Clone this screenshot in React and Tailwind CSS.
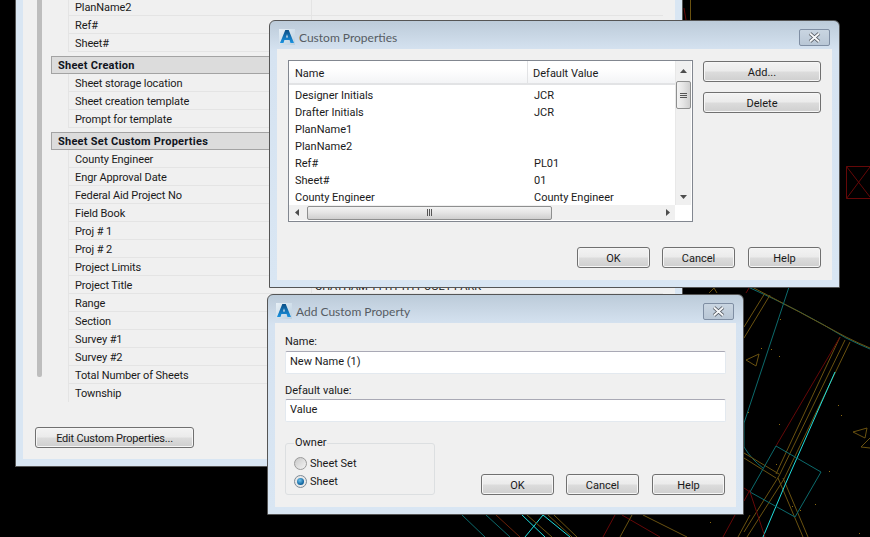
import React from "react";

// CAD drawing behind the dialogs
const BROWN = "#6a5210";
const TEAL = "#0c6a6c";
const RED = "#650808";
const CYAN = "#1fdcdc";

const cadLines = [
  // top
  [RED, "M684 8 Q685 14 686 20"],
  [BROWN, "M690.5 0 L690.5 20"],
  [RED, "M846.5 166.5 H870 M846.5 166.5 V198.5 H870 M846.5 166.5 L870 197 M846.5 198.5 L870 167"],
  // big arc
  [TEAL, "M748 287 Q800 310 846 338 Q858 344 870 349"],
  [BROWN, "M752 287 Q800 312 846 337 Q858 343 870 348"],
  // teal road edge
  [TEAL, "M789 287 L744 423 L744 447 Q752 460 763 468"],
  // brown doubles
  [BROWN, "M770 295 L744 338 M765 293 L744 327"],
  [BROWN, "M845 340 L779 476 L744 532 M850 342 L784 479 L747 537 M840 337 L776 474"],
  [BROWN, "M744 453 L779 474 M744 458 L776 478"],
  [BROWN, "M778 478 L803 537 M783 478 L808 537"],
  [RED, "M840 337 L776 446"],
  [CYAN, "M835 372 L785 485 L763 537"],
  [TEAL, "M776 446 L821 472 L795 517 L750 492 Z"],
  [RED, "M744 488 L750 492 L765 537 M750 490 L744 501"],
  [BROWN, "M746 360 L759 354 L756 366 Z"],
  [BROWN, "M853 432 L867 428 L865 438 Z"],
  [BROWN, "M870 438 L861 447 L870 448"],
  // bottom
  [BROWN, "M709 293 L714 288 L717 293"],
  [RED, "M746 293 L749 288"],
  [TEAL, "M462 515 L485 537 M486 515 L510 537"],
  ["#6b2208", "M496 515 L520 537"],
  [CYAN, "M522 515 L545 537 M543 515 L570 537 M543 515 L525 537"],
  [BROWN, "M527 515 L552 537 M548 515 L572 537 M554 515 L577 537"],
  [RED, "M622 515 L660 537 M615 515 L603 537 M735 515 L723 537"],
  [BROWN, "M632 515 L620 537 M643 515 L687 537 M750 515 L738 537"],
];

const cadDots = [
  [780, 319], [771, 349], [779, 356], [761, 348], [838, 405], [841, 415], [779, 424], [829, 471],
  [776, 464], [792, 506], [815, 504], [859, 533], [710, 522], [748, 412], [636, 348], [800, 510],
];

function CadDrawing() {
  return (
    <svg className="absolute inset-0" width="870" height="537" viewBox="0 0 870 537" fill="none">
      {cadLines.map(([color, d], i) => (
        <path key={i} d={d} stroke={color} strokeWidth="1" />
      ))}
      {cadDots.map(([x, y], i) => (
        <rect key={i} x={x} y={y} width="1" height="1" fill="#8a6a10" />
      ))}
    </svg>
  );
}

function AppIcon({ id }) {
  return (
    <svg width="16" height="16" viewBox="0 0 16 16" className="shrink-0">
      <defs>
        <linearGradient id={id + "bg"} x1="0" y1="0" x2="1" y2="1">
          <stop offset="0" stopColor="#e8f0f6" />
          <stop offset="1" stopColor="#bcd0e0" />
        </linearGradient>
        <linearGradient id={id + "leg"} x1="0" y1="0" x2="0" y2="1">
          <stop offset="0" stopColor="#0b4f86" />
          <stop offset="1" stopColor="#1a92e0" />
        </linearGradient>
      </defs>
      <rect width="16" height="16" fill={"url(#" + id + "bg)"} />
      <path d="M6.3 1 H9.7 L15 14 H11.5 L10.6 11 H5.4 L4.5 14 H1 Z M7 8.5 H9 L8 5.2 Z" fill={"url(#" + id + "leg)"} fillRule="evenodd" />
    </svg>
  );
}

function CloseButton() {
  return (
    <div className="flex h-[17px] w-[31px] items-center justify-center rounded-[2px] border border-[#7f8ea3] bg-gradient-to-b from-[#c9d5e1] to-[#b9c7d6]">
      <svg width="13" height="11" viewBox="0 0 13 11">
        <path d="M2 1.5 L11 9.5 M11 1.5 L2 9.5" stroke="#4a4f57" strokeWidth="3.6" />
        <path d="M2 1.5 L11 9.5 M11 1.5 L2 9.5" stroke="#f4f6f8" strokeWidth="2" />
      </svg>
    </div>
  );
}

function Btn({ children, className }) {
  return (
    <div
      className={
        "flex h-[21px] items-center justify-center rounded-[3px] border border-[#707070] bg-[linear-gradient(#f3f3f3,#ebebeb_48%,#dcdcdc_52%,#cfcfcf)] pt-[3px] text-[11px] text-[#1a1a1a] shadow-[inset_0_0_0_1px_#f6f6f6] " +
        className
      }
    >
      {children}
    </div>
  );
}

function TitleBar({ title, iconClass, id }) {
  return (
    <div className="flex h-[29px] items-center justify-between pr-[2px] pt-[3px]">
      <div className={"flex items-center gap-[4px] " + iconClass}>
        <AppIcon id={id} />
        <span className="mt-[1px] font-['Lato',sans-serif] text-[12px] text-[#565c63]">{title}</span>
      </div>
      <CloseButton />
    </div>
  );
}

function PropRow({ label, value, last }) {
  return (
    <div className={"flex h-[18px] items-center border-l border-[#e4e4e4] " + (last ? "" : "border-b")}>
      <div className="w-[242px] pl-[6px] pt-[1px] text-[11px] leading-none tracking-[-0.1px] text-[#1a1a1a]">{label}</div>
      <div className="h-full flex-1 border-l border-[#e4e4e4] pl-[3px] pt-[2px] text-[11px] leading-[18px] text-[#1a1a1a]">{value}</div>
    </div>
  );
}

function GroupHeader({ title }) {
  return (
    <div className="flex h-[18px] items-center border border-[#a3a3a3] bg-[#dcdcdc] pl-[6px] pt-[2px] text-[11px] font-bold tracking-[0.25px] text-[#10141c]">
      {title}
    </div>
  );
}

const topRows = ["PlanName2", "Ref#", "Sheet#"];
const creationRows = ["Sheet storage location", "Sheet creation template", "Prompt for template"];
const customRows = [
  "County Engineer", "Engr Approval Date", "Federal Aid Project No", "Field Book", "Proj # 1", "Proj # 2",
  "Project Limits", "Project Title", "Range", "Section", "Survey #1", "Survey #2", "Total Number of Sheets", "Township",
];

function BackPanel() {
  return (
    <div className="absolute left-[15px] top-[-10px] flex h-[477px] w-[668px] flex-col border border-[#555] bg-[#d9e6f3] px-[7px] pb-[7px] pt-[7px]">
      <div className="flex flex-1 flex-col bg-[#f0f0f0] pl-[12px]">
        <div className="flex">
          <div className="ml-[2px] h-[379px] w-[5px] rounded-b-[2px] bg-[#bdbdbd]" />
          <div className="ml-[9px] w-[612px]">
            <div className="ml-[17px]">
              {topRows.map((r) => <PropRow key={r} label={r} />)}
            </div>
            <div className="mt-[4px]"><GroupHeader title="Sheet Creation" /></div>
            <div className="ml-[17px]">
              {creationRows.map((r) => <PropRow key={r} label={r} />)}
            </div>
            <div className="mt-[4px]"><GroupHeader title="Sheet Set Custom Properties" /></div>
            <div className="ml-[17px]">
              {customRows.map((r, i) => (
                <PropRow
                  key={r}
                  label={r}
                  last={i === customRows.length - 1}
                  value={r === "Project Title" ? "CHATHAM 11TH TH PUGET PARK" : ""}
                />
              ))}
            </div>
          </div>
        </div>
        <Btn className="mt-[25px] w-[159px] tracking-[-0.2px]">Edit Custom Properties...</Btn>
      </div>
    </div>
  );
}

const customProps = [
  ["Designer Initials", "JCR"],
  ["Drafter Initials", "JCR"],
  ["PlanName1", ""],
  ["PlanName2", ""],
  ["Ref#", "PL01"],
  ["Sheet#", "01"],
  ["County Engineer", "County Engineer"],
];

function Arrow({ d }) {
  return (
    <svg width="9" height="9" viewBox="0 0 9 9">
      <path d={d} fill="#4d4d4d" />
    </svg>
  );
}

function Grip({ vertical }) {
  return (
    <svg width="9" height="9" viewBox="0 0 9 9">
      {vertical ? (
        <path d="M1 2.5 H8 M1 4.5 H8 M1 6.5 H8" stroke="#555" />
      ) : (
        <path d="M2.5 1 V8 M4.5 1 V8 M6.5 1 V8" stroke="#555" />
      )}
    </svg>
  );
}

function CustomPropertiesDialog() {
  return (
    <div className="absolute left-[269px] top-[20px] flex h-[268px] w-[571px] flex-col rounded-t-[6px] border border-[#555] bg-[linear-gradient(#bccbd9,#d6e3f1_30px,#d9e6f3)] px-[7px] pb-[7px]">
      <div className="-mb-px">
        <TitleBar title="Custom Properties" iconClass="ml-[2px]" id="cp" />
      </div>
      <div className="flex flex-1 flex-col bg-[#f0f0f0] px-[11px] pt-[11px]">
        <div className="flex">
          <div className="flex h-[162px] w-[405px] border border-[#828790] bg-white">
            <div className="flex w-[386px] flex-col">
              <div className="flex h-[24px] items-stretch border-b-2 border-[#e2e3e5] bg-[linear-gradient(#ffffff,#ffffff_35%,#f3f4f6)] text-[11px] text-[#1a1a1a]">
                <div className="flex w-[239px] items-center border-r border-[#e2e3e5] pl-[6px] pt-[5px]">Name</div>
                <div className="flex items-center pl-[5px] pt-[5px]">Default Value</div>
              </div>
              <div className="flex h-[120px] flex-col overflow-hidden pt-[3px]">
                {customProps.map(([name, val]) => (
                  <div key={name} className="flex h-[17px] shrink-0 items-center text-[11px] text-[#1a1a1a]">
                    <div className="w-[240px] pl-[6px]">{name}</div>
                    <div className="pl-[5px]">{val}</div>
                  </div>
                ))}
              </div>
              <div className="flex h-[15px] items-center bg-[#f0f0f0] pl-[4px]">
                <Arrow d="M6 1 V8 L2 4.5 Z" />
                <div className="ml-[5px] flex h-[14px] w-[245px] items-center justify-center rounded-[2px] border border-[#8e8f8f] bg-[linear-gradient(#f3f3f3,#e4e4e4_50%,#cfcfcf)]">
                  <Grip />
                </div>
                <div className="ml-auto mr-[3px]">
                  <Arrow d="M3 1 V8 L7 4.5 Z" />
                </div>
              </div>
            </div>
            <div className="flex h-[144px] w-[16px] flex-col items-center border-l border-[#e8e8e8] bg-[#f0f0f0] pt-[6px]">
              <Arrow d="M1 6 H8 L4.5 2 Z" />
              <div className="mt-[5px] flex h-[28px] w-[15px] items-center justify-center rounded-[2px] border border-[#8e8f8f] bg-[linear-gradient(90deg,#f3f3f3,#e4e4e4_50%,#cfcfcf)]">
                <Grip vertical />
              </div>
              <div className="mt-auto mb-[4px]">
                <Arrow d="M1 3 H8 L4.5 7 Z" />
              </div>
            </div>
          </div>
          <div className="ml-[10px] flex w-[118px] flex-col gap-[10px] pt-[1px]">
            <Btn className="w-full">Add...</Btn>
            <Btn className="w-full">Delete</Btn>
          </div>
        </div>
        <div className="mb-[12px] mt-auto flex justify-end gap-[12px]">
          <Btn className="w-[73px]">OK</Btn>
          <Btn className="w-[73px]">Cancel</Btn>
          <Btn className="ml-px w-[73px]">Help</Btn>
        </div>
      </div>
    </div>
  );
}

function Radio({ checked, label }) {
  return (
    <div className="flex h-[18px] items-center gap-[3px] text-[11px] text-[#1a1a1a]">
      {checked ? (
        <div className="flex h-[13px] w-[13px] items-center justify-center rounded-full border border-[#7d8a96] bg-[#e8e8e8]">
          <div className="h-[7px] w-[7px] rounded-full bg-[radial-gradient(circle_at_40%_35%,#6ec3ef,#0b5f9a_70%)]" />
        </div>
      ) : (
        <div className="h-[13px] w-[13px] rounded-full border border-[#9a9a9a] bg-[linear-gradient(135deg,#c8c8c8,#f4f4f4)]" />
      )}
      <span className="pt-[2px]">{label}</span>
    </div>
  );
}

function TextBox({ value }) {
  return (
    <div className="flex h-[23px] w-[441px] items-center rounded-[2px] border border-[#e3e9ef] border-t-[#a9a9b5] bg-white pl-[4px] text-[11px] text-[#1a1a1a]">
      {value}
    </div>
  );
}

function AddPropertyDialog() {
  return (
    <div className="absolute left-[267px] top-[294px] flex h-[221px] w-[477px] flex-col rounded-t-[6px] border border-[#555] bg-[linear-gradient(#bccbd9,#d6e3f1_30px,#d9e6f3)] px-[7px] pb-[7px]">
      <div className="-mb-px">
        <TitleBar title="Add Custom Property" iconClass="ml-[1px]" id="ap" />
      </div>
      <div className="flex-1 bg-[#f0f0f0] px-[10px] pt-[10px]">
        <div className="h-[16px] text-[11px] leading-[18px] text-[#1a1a1a]">Name:</div>
        <div className="mt-[2px]"><TextBox value="New Name (1)" /></div>
        <div className="mt-[8px] h-[16px] text-[11px] leading-[18px] text-[#1a1a1a]">Default value:</div>
        <div className="mt-[1px]"><TextBox value="Value" /></div>
        <div className="mt-[12px] flex items-end">
          <fieldset className="h-[61px] w-[150px] rounded-[3px] border border-[#dcdfe1] pl-[8px] pt-[2px]">
            <legend className="px-[1px] text-[11px] leading-[18px] text-[#1a1a1a]">Owner</legend>
            <Radio label="Sheet Set" />
            <Radio checked label="Sheet" />
          </fieldset>
          <div className="ml-[46px] flex gap-[12px]">
            <Btn className="w-[73px]">OK</Btn>
            <Btn className="w-[73px]">Cancel</Btn>
            <Btn className="ml-px w-[73px]">Help</Btn>
          </div>
        </div>
      </div>
    </div>
  );
}

export default function App() {
  return (
    <div className="relative h-[537px] w-[870px] overflow-hidden bg-black font-['Roboto',sans-serif]">
      <CadDrawing />
      <BackPanel />
      <CustomPropertiesDialog />
      <AddPropertyDialog />
    </div>
  );
}
